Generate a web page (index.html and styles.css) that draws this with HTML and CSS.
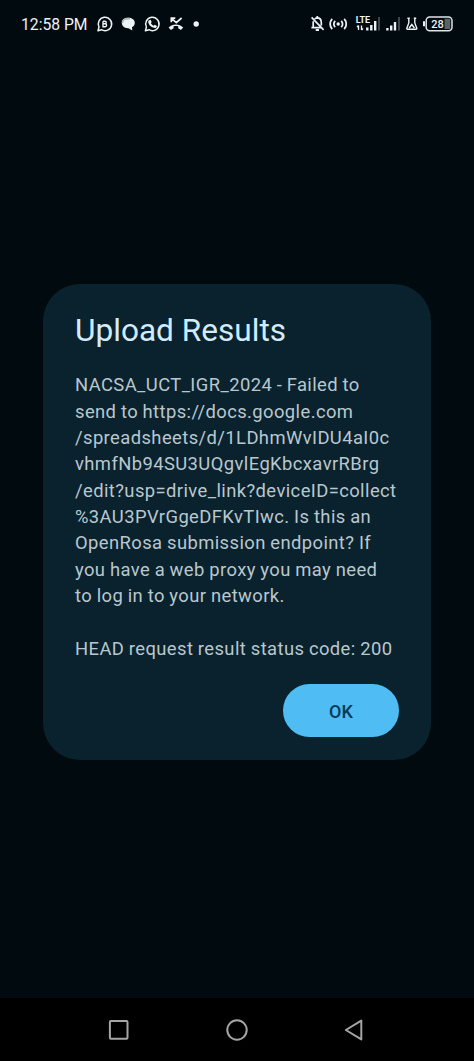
FILE: index.html
```html
<!DOCTYPE html>
<html lang="en">
<head>
<meta charset="utf-8">
<title>Upload Results</title>
<link rel="stylesheet" href="styles.css">
</head>
<body>
<div class="screen">
  <header class="status">
    <span class="clock">12:58 PM</span>
    <svg class="status-left" width="108" height="24" viewBox="94 12 108 24" fill="none" stroke="#eef3f5" stroke-width="1.5">
      <path d="M98 30.7l1-3.7a6.7 6.7 0 1 1 2.5 2.7z" stroke-linejoin="round"/>
      <path d="M103 21.200v5.600h2.100a1.500 1.500 0 0 0 0-3H103m0-2.600h1.900a1.300 1.300 0 0 1 0 2.600" stroke-width="1.400"/>
      <path d="M121.800 22.500c0-3 2.500-4.700 6.200-4.700 4 0 6.800 2 6.800 5 0 2-1.100 3.600-2.800 4.500l.3 3.300-3.800-2.400c-4.200.3-6.700-2.500-6.700-5.700z" fill="#eef3f5" stroke="none"/>
      <path d="M122.500 23c-.2-3 2.500-4.600 7.500-4.300" stroke="#aeb7ba" stroke-width="1.600"/>
      <path d="M145.400 30.700l1-3.700a6.700 6.700 0 1 1 2.500 2.700z" stroke-linejoin="round"/>
      <path d="M149.300 20.200l1.300-.4 1.100 2.300-.8 1.100c.7 1.300 1.500 2 2.800 2.600l1-1 2.200 1.100c-.1 1.700-1.400 2.300-3 1.900-3-.7-5.400-3.300-5.700-5.900-.1-.7.300-1.300 1.100-1.700z" fill="#eef3f5" stroke="none"/>
      <path d="M171.300 22.200v-4h4m-3.800.2l4.800 4.300 5.300-4.700" stroke-width="1.700"/>
      <path d="M168.600 27.600c4-4 10.600-4 14.600 0l-2.300 2.300-2.700-1.700v-1.900c-1.500-.5-3.100-.5-4.600 0v1.900l-2.700 1.700z" fill="#eef3f5" stroke="none"/>
      <circle cx="196.200" cy="24" r="2.700" fill="#eef3f5" stroke="none"/>
    </svg>
    <svg class="status-right" width="146" height="24" viewBox="309 12 146 24" fill="none" stroke="#eef3f5" stroke-width="1.500">
      <path d="M313.200 27.500v-6.300m1.500-2.200c.7-.7 1.500-1 2.300-1.100 2.600 0 4.300 2 4.300 4.600v3m-9.900 2.200h9.800M311.600 17.300l12 12.600" stroke-width="1.700"/>
      <path d="M317.300 16v2M315.700 30h3.300" stroke-width="1.800"/>
      <circle cx="338.200" cy="24" r="1.700" fill="#eef3f5" stroke="none"/>
      <path d="M335.200 20.800a4.400 4.400 0 0 0 0 6.400M341.200 20.800a4.400 4.400 0 0 1 0 6.400M332.200 18.800a7.600 7.600 0 0 0 0 10.400M344.200 18.800a7.600 7.600 0 0 1 0 10.400" stroke-width="1.800"/>
      <text class="lte" x="355.700" y="23.200" textLength="14.500" lengthAdjust="spacingAndGlyphs">LTE</text>
      <path d="M358.500 30v-4.500m-1.500 1.500l1.500-1.500M361.500 25.500V30m1.500-1.500l-1.500 1.500" stroke-width="1.300"/>
      <path d="M367.300 30.500v-3M371.300 30.500v-5.500M375.200 30.500v-9.500" stroke-width="2.400"/>
      <path d="M379 30.500V17" stroke="#3d484c" stroke-width="2"/>
      <path d="M387.400 30.500v-2.500M391.200 30.500v-5M395 30.500v-8.500" stroke-width="2.400"/>
      <path d="M399 30.500V17" stroke="#3d484c" stroke-width="2"/>
      <path d="M408.800 18.500v4.400l-2 5.400c-.2.700.2 1 .8 1h8.400c.6 0 1-.3.800-1l-2-5.400v-4.400M407.400 18.300h2.400M413.800 18.300h2.400M409.200 28l2.600-3.500 2.600 3.500" stroke-width="1.400"/>
      <rect x="426.200" y="17" width="25.800" height="13.700" rx="3.500" stroke="#dfe4e6"/>
      <path d="M424 21.300v5" stroke-width="2"/>
      <path d="M444.500 18.700h5.800V29h-5.800z" fill="#596266" stroke="none"/>
      <text class="charge" x="431.300" y="27.900">28</text>
    </svg>
  </header>
  <main class="scrim">
    <section class="dialog" role="dialog" aria-labelledby="title">
      <h1 class="title" id="title">Upload Results</h1>
      <p class="message">NACSA_UCT_IGR_2024 - Failed to
send to https://docs.google.com
/spreadsheets/d/1LDhmWvIDU4aI0c
vhmfNb94SU3UQgvlEgKbcxavrRBrg
/edit?usp=drive_link?deviceID=collect
%3AU3PVrGgeDFKvTIwc. Is this an
OpenRosa submission endpoint? If
you have a web proxy you may need
to log in to your network.

HEAD request result status code: 200</p>
      <button class="ok">OK</button>
    </section>
  </main>
  <nav class="navigation">
    <svg width="24" height="24" viewBox="0 0 24 24"><rect x="2.900" y="3.100" width="17.600" height="17.600" rx="1"/></svg>
    <svg width="24" height="24" viewBox="0 0 24 24"><circle cx="12" cy="12" r="9.700"/></svg>
    <svg width="24" height="24" viewBox="0 0 24 24"><path d="M2.800 12L18.300 2.600v18.800z"/></svg>
  </nav>
</div>
</body>
</html>
```
FILE: styles.css
```css
body {
  margin: 0;
  background: #000a0f;
  font-family: Roboto, sans-serif;
}
.screen {
  height: 1061px;
  display: flex;
  flex-direction: column;
}
.status {
  height: 48px;
  box-sizing: border-box;
  padding: 0 19px 0 21px;
  display: flex;
  align-items: center;
}
.clock {
  width: 73px;
  color: #eef3f5;
  font-size: 15.700px;
  white-space: nowrap;
}
.status-right { margin-left: auto; }
.lte {
  font: 700 9px Roboto, sans-serif;
  fill: #eef3f5;
  stroke: none;
}
.charge {
  font: 500 11px Roboto, sans-serif;
  fill: #eef3f5;
  stroke: none;
}
.scrim {
  flex: 1;
  display: flex;
  flex-direction: column;
  align-items: center;
  padding-top: 236.400px;
}
.dialog {
  width: 387.400px;
  height: 476px;
  box-sizing: border-box;
  padding: 26.500px 31.700px 23.400px;
  border-radius: 37px;
  background: #0a222d;
  display: flex;
  flex-direction: column;
}
.title {
  margin: 0;
  color: #d2ecff;
  font-size: 31.600px;
  line-height: 40px;
  font-weight: 400;
}
.message {
  margin: 21.500px 0 0;
  color: #b9c7cf;
  font-size: 18.400px;
  line-height: 26.330px;
  letter-spacing: 0.410px;
  word-spacing: -0.450px;
  white-space: pre;
}
.ok {
  width: 116px;
  height: 53px;
  margin: auto 0 0;
  padding: 1px 0 0;
  align-self: flex-end;
  border: 0;
  border-radius: 27px;
  background: #4fbcf3;
  color: #083b55;
  font: 500 18px Roboto, sans-serif;
}
.navigation {
  height: 63px;
  background: #000;
  display: flex;
  align-items: center;
  justify-content: center;
  gap: 94px;
}
.navigation svg {
  fill: none;
  stroke: #a5a5a5;
  stroke-width: 2;
  stroke-linejoin: round;
}
```
